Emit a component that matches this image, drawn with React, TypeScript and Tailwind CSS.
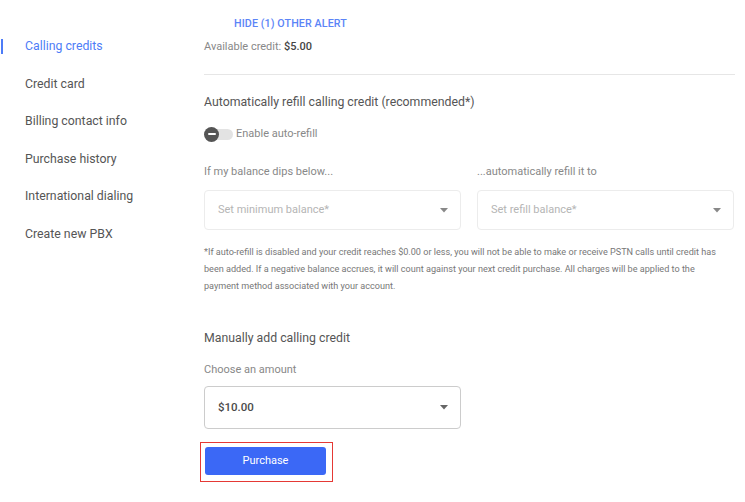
import React from "react";

function Caret({ color = "#777" }: { color?: string }) {
  return (
    <svg width="8" height="5" viewBox="0 0 8 5" className="shrink-0">
      <path d="M0 0 L8 0 L4 4.5 Z" fill={color} />
    </svg>
  );
}

const navItems = [
  "Calling credits",
  "Credit card",
  "Billing contact info",
  "Purchase history",
  "International dialing",
  "Create new PBX",
];

export default function App() {
  return (
    <div
      className="w-[745px] h-[502px] bg-white flex overflow-hidden"
      style={{ fontFamily: "Roboto, 'Liberation Sans', sans-serif" }}
    >
      {/* Sidebar */}
      <div className="w-[204px] shrink-0 pt-[27.5px] flex flex-col">
        {navItems.map((item, i) => (
          <div key={item} className="h-[37.5px] flex items-center">
            {i === 0 ? (
              <div className="w-[2px] h-[15px] bg-[#4d7cf7] ml-[1px]" />
            ) : (
              <div className="w-[2px] h-[15px] ml-[1px]" />
            )}
            <span
              className={
                "ml-[22px] text-[12.3px] " +
                (i === 0 ? "text-[#4d7cf7]" : "text-[#555555]")
              }
            >
              {item}
            </span>
          </div>
        ))}
      </div>

      {/* Main */}
      <div className="w-[530px] pt-[16px] flex flex-col">
        <div className="ml-[30px] leading-[16px] text-[10.7px] font-medium text-[#5b84f7] tracking-[0.1px]">
          HIDE (1) OTHER ALERT
        </div>
        <div className="mt-[7px] leading-[16px] text-[11px] text-[#888888]">
          Available credit: <span className="font-medium text-[#444444]">$5.00</span>
        </div>
        <div className="mt-[19px] h-px bg-[#e6e6e6] w-[531px]" />

        <div className="mt-[18px] leading-[18px] text-[12.3px] text-[#555555]">
          Automatically refill calling credit (recommended*)
        </div>

        <div className="mt-[14px] h-[18px] flex items-center">
          <div className="relative w-[29px] h-[15px] flex items-center">
            <div className="w-[27px] h-[11px] ml-[2px] rounded-full bg-[#e3e3e3]" />
            <div className="absolute left-0 top-0 w-[15px] h-[15px] rounded-full bg-[#555555] flex items-center justify-center">
              <div className="w-[8px] h-[2px] bg-white rounded-[1px]" />
            </div>
          </div>
          <span className="ml-[3px] text-[11px] text-[#888888]">Enable auto-refill</span>
        </div>

        <div className="mt-[21px] grid grid-cols-2 gap-x-[16px]">
          <div className="leading-[16px] text-[11px] text-[#888888]">If my balance dips below...</div>
          <div className="leading-[16px] text-[11px] text-[#888888]">...automatically refill it to</div>
          <div className="mt-[10px] h-[40px] rounded-[4px] border border-[#ececec] flex items-center justify-between pl-[13px] pr-[12px]">
            <span className="text-[11px] text-[#b5b5b5]">Set minimum balance*</span>
            <Caret color="#888" />
          </div>
          <div className="mt-[10px] h-[40px] rounded-[4px] border border-[#ececec] flex items-center justify-between pl-[13px] pr-[12px]">
            <span className="text-[11px] text-[#b5b5b5]">Set refill balance*</span>
            <Caret color="#888" />
          </div>
        </div>

        <div className="mt-[14px] text-[9.1px] leading-[17px] text-[#777777] whitespace-nowrap">
          <div>
            *If auto-refill is disabled and your credit reaches $0.00 or less, you will not be able to make or receive PSTN calls until credit has
          </div>
          <div>
            been added. If a negative balance accrues, it will count against your next credit purchase. All charges will be applied to the
          </div>
          <div>payment method associated with your account.</div>
        </div>

        <div className="mt-[34px] leading-[18px] text-[12.3px] text-[#555555]">
          Manually add calling credit
        </div>
        <div className="mt-[15px] leading-[16px] text-[11px] text-[#888888]">Choose an amount</div>

        <div className="mt-[8px] w-[257px] h-[43px] rounded-[4px] border border-[#cccccc] flex items-center justify-between pl-[13px] pr-[12px]">
          <span className="text-[11.5px] font-medium text-[#4a4a4a]">$10.00</span>
          <Caret color="#666" />
        </div>

        <div className="mt-[13px] -ml-[4px] w-[133px] h-[40px] border-[1.5px] border-[#e53935] pl-[4px] pt-[4px]">
          <button className="w-[121px] h-[28px] rounded-[3px] bg-[#3b68f6] text-white text-[11px] flex items-center justify-center">
            Purchase
          </button>
        </div>
      </div>
    </div>
  );
}
